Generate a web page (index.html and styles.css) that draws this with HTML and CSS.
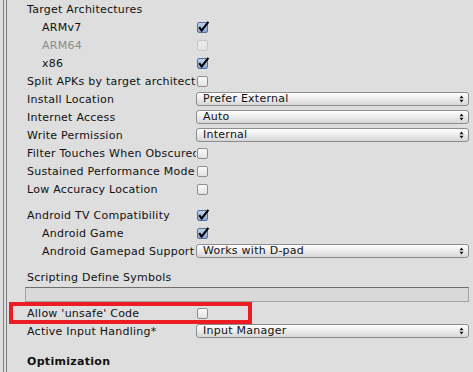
FILE: index.html
```html
<!DOCTYPE html>
<html>
<head>
<meta charset="utf-8">
<link rel="stylesheet" href="styles.css">
</head>
<body>
<div class="frame">
  <div class="inner">
    <div class="content">
      <div class="row"><div class="label">Target Architectures</div></div>
      <div class="row"><div class="label indent">ARMv7</div><span class="cb checked"><svg viewBox="0 0 13 13" width="13" height="13"><path d="M2.2 6.2 L4.6 9.6 L11.4 0.8" fill="none" stroke="#000" stroke-width="2.1" stroke-linejoin="miter"/></svg></span></div>
      <div class="row"><div class="label indent disabled">ARM64</div><span class="cb off"></span></div>
      <div class="row"><div class="label indent">x86</div><span class="cb checked"><svg viewBox="0 0 13 13" width="13" height="13"><path d="M2.2 6.2 L4.6 9.6 L11.4 0.8" fill="none" stroke="#000" stroke-width="2.1"/></svg></span></div>
      <div class="row"><div class="label">Split APKs by target architecture</div><span class="cb"></span></div>
      <div class="row"><div class="label">Install Location</div><div class="dd">Prefer External<svg class="arr" viewBox="0 0 5 8" width="5" height="8"><path d="M0.5 3.2 L2.5 0.6 L4.5 3.2 Z M0.5 4.8 L2.5 7.4 L4.5 4.8 Z" fill="#111"/></svg></div></div>
      <div class="row"><div class="label">Internet Access</div><div class="dd">Auto<svg class="arr" viewBox="0 0 5 8" width="5" height="8"><path d="M0.5 3.2 L2.5 0.6 L4.5 3.2 Z M0.5 4.8 L2.5 7.4 L4.5 4.8 Z" fill="#111"/></svg></div></div>
      <div class="row"><div class="label">Write Permission</div><div class="dd">Internal<svg class="arr" viewBox="0 0 5 8" width="5" height="8"><path d="M0.5 3.2 L2.5 0.6 L4.5 3.2 Z M0.5 4.8 L2.5 7.4 L4.5 4.8 Z" fill="#111"/></svg></div></div>
      <div class="row"><div class="label">Filter Touches When Obscured</div><span class="cb"></span></div>
      <div class="row"><div class="label">Sustained Performance Mode</div><span class="cb"></span></div>
      <div class="row"><div class="label">Low Accuracy Location</div><span class="cb"></span></div>
      <div class="row gap8"><div class="label">Android TV Compatibility</div><span class="cb checked"><svg viewBox="0 0 13 13" width="13" height="13"><path d="M2.2 6.2 L4.6 9.6 L11.4 0.8" fill="none" stroke="#000" stroke-width="2.1"/></svg></span></div>
      <div class="row"><div class="label indent">Android Game</div><span class="cb checked"><svg viewBox="0 0 13 13" width="13" height="13"><path d="M2.2 6.2 L4.6 9.6 L11.4 0.8" fill="none" stroke="#000" stroke-width="2.1"/></svg></span></div>
      <div class="row"><div class="label indent">Android Gamepad Support Level</div><div class="dd">Works with D-pad<svg class="arr" viewBox="0 0 5 8" width="5" height="8"><path d="M0.5 3.2 L2.5 0.6 L4.5 3.2 Z M0.5 4.8 L2.5 7.4 L4.5 4.8 Z" fill="#111"/></svg></div></div>
      <div class="row gap8"><div class="label">Scripting Define Symbols</div></div>
      <div class="field"></div>
      <div class="row"><div class="label">Allow 'unsafe' Code</div><span class="cb"></span></div>
      <div class="row"><div class="label">Active Input Handling*</div><div class="dd">Input Manager<svg class="arr" viewBox="0 0 5 8" width="5" height="8"><path d="M0.5 3.2 L2.5 0.6 L4.5 3.2 Z M0.5 4.8 L2.5 7.4 L4.5 4.8 Z" fill="#111"/></svg></div></div>
      <div class="row gap12"><div class="label bold">Optimization</div></div>
    </div>
  </div>
</div>
<div class="highlight"></div>
</body>
</html>
```
FILE: styles.css
```css
html, body {
  margin: 0;
  padding: 0;
  background: #dedede;
  overflow: hidden;
}
body {
  width: 473px;
  height: 372px;
  font-family: "DejaVu Sans", Verdana, sans-serif;
  font-size: 11px;
  color: #111;
  position: relative;
}
.frame {
  margin-left: 3px;
  border-left: 1px solid #808080;
  height: 372px;
}
.inner {
  margin-left: 2px;
  border-left: 1px solid #808080;
  height: 372px;
}
.content {
  padding-left: 20px;
  display: flex;
  flex-direction: column;
}
.row {
  height: 18px;
  display: flex;
  align-items: center;
}
.gap8 { margin-top: 8px; }
.gap12 { margin-top: 12px; }
.label {
  width: 169px;
  flex: none;
  white-space: nowrap;
  overflow: hidden;
  line-height: 14px;
  padding-top: 2px;
  box-sizing: border-box;
  letter-spacing: 0.25px;
}
.indent { padding-left: 15px; }
.disabled { color: #8a8a8a; }
.bold { font-weight: bold; letter-spacing: 0.3px; }
.cb {
  flex: none;
  margin-left: 1px;
  width: 11px;
  height: 11px;
  box-sizing: border-box;
  border: 1px solid #8e8e8e;
  border-radius: 2px;
  background: linear-gradient(#fafafa, #e2e2e2);
  position: relative;
}
.cb.off {
  border-color: #c8c8c8;
  background: linear-gradient(#ececec, #e2e2e2);
}
.cb.checked {
  border-color: #5a6f92;
  background: linear-gradient(#bfd0ec, #8ea7d2);
}
.cb svg {
  position: absolute;
  left: -1px;
  top: -2px;
  overflow: visible;
}
.dd {
  flex: none;
  width: 273px;
  height: 14px;
  box-sizing: border-box;
  border: 1px solid #8d8d8d;
  border-radius: 3px;
  background: linear-gradient(#ffffff, #e8e8e8 60%, #d6d6d6);
  padding-left: 6px;
  display: flex;
  align-items: center;
  justify-content: space-between;
  padding-right: 4px;
  line-height: 12px;
  font-size: 11px;
  letter-spacing: 0.25px;
}
.arr { flex: none; }
.field {
  margin-left: -2px;
  margin-top: 1px;
  margin-bottom: 2px;
  width: 444px;
  height: 15px;
  box-sizing: border-box;
  border: 1px solid #a2a2a2;
  border-top-color: #6f6f6f;
  background: #d9d9d9;
}
.highlight {
  position: absolute;
  left: 9px;
  top: 302px;
  width: 243px;
  height: 22px;
  box-sizing: border-box;
  border: 4px solid #ec1c24;
}
```
